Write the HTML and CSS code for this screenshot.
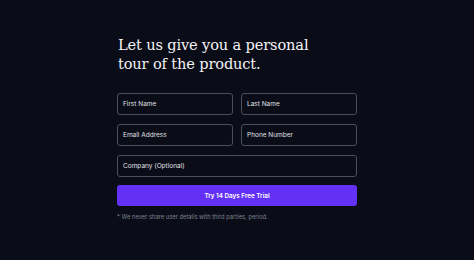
FILE: index.html
```html
<!DOCTYPE html>
<html>
<head>
<meta charset="utf-8">
<link rel="stylesheet" href="styles.css">
</head>
<body>
<div class="page">
  <div class="panel">
    <h1 class="title">Let us give you a personal<br>tour of the product.</h1>
    <form class="form">
      <div class="row">
        <div class="field">First Name</div>
        <div class="field">Last Name</div>
      </div>
      <div class="row">
        <div class="field">Email Address</div>
        <div class="field">Phone Number</div>
      </div>
      <div class="field">Company (Optional)</div>
      <div class="button">Try 14 Days Free Trial</div>
      <p class="note">* We never share user details with third parties, period.</p>
    </form>
  </div>
</div>
</body>
</html>
```

FILE: styles.css
```css
html, body {
  margin: 0;
  padding: 0;
  background: #0a0c18;
}
.page {
  width: 474px;
  height: 260px;
  display: flex;
  justify-content: center;
  background: #0a0c18;
}
.panel {
  width: 240px;
  padding-top: 36px;
}
.title {
  margin: 0 0 0 1px;
  font-family: "DejaVu Serif", serif;
  font-weight: normal;
  font-size: 14.6px;
  line-height: 18.5px;
  letter-spacing: -0.15px;
  color: #f4f4f6;
}
.form {
  margin-top: 20px;
  display: flex;
  flex-direction: column;
  gap: 9px;
}
.row {
  display: grid;
  grid-template-columns: 1fr 1fr;
  gap: 8px;
}
.field {
  height: 22px;
  box-sizing: border-box;
  border: 1px solid #4b4e5c;
  border-radius: 3px;
  padding: 0 5px;
  display: flex;
  align-items: center;
  font-family: "Inter", "Liberation Sans", sans-serif;
  font-size: 6.5px;
  color: #e0e1e6;
}
.button {
  margin-top: -1px;
  height: 21px;
  border-radius: 3px;
  background: #6331f6;
  display: flex;
  align-items: center;
  justify-content: center;
  font-family: "Inter", "Liberation Sans", sans-serif;
  font-weight: 600;
  font-size: 6.3px;
  color: #ffffff;
}
.note {
  margin: -2px 0 0 0;
  font-family: "Inter", "Liberation Sans", sans-serif;
  font-size: 5.8px;
  color: #7f828e;
}
```
